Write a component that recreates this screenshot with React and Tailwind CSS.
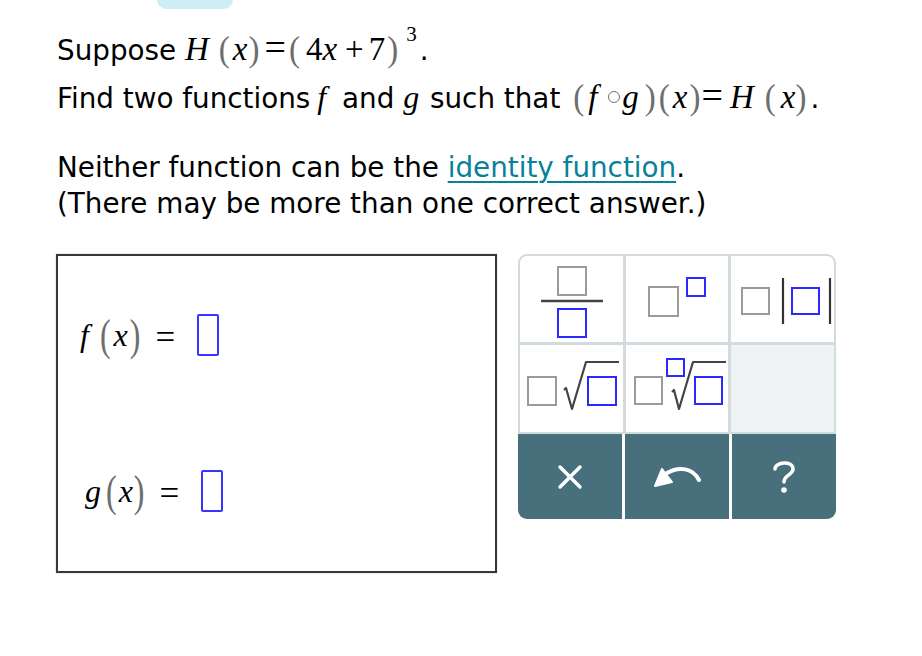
import React from "react";

const SANS = "font-['DejaVu_Sans','Verdana',sans-serif]";
const SERIF = "font-['Liberation_Serif','Times_New_Roman',serif]";

function P({ children, cls }) {
  return <span className={`inline-block text-[#6e6e6e] ${cls}`}>{children}</span>;
}

function Comp({ cls }) {
  return <span className={`inline-block w-[12px] h-[12px] rounded-full border-[1.5px] border-[#707070] align-[5px] ${cls}`} />;
}

function BlueBox() {
  return <span className="inline-block w-[22px] h-[42px] border-2 border-[#3535ff] rounded-[2px]" />;
}

function Cell({ children, cls }) {
  return <div className={`flex items-center justify-center ${cls}`}>{children}</div>;
}

function KeyFraction() {
  return (
    <svg width="102" height="86" viewBox="0 0 102 86">
      <rect x="38" y="11" width="28" height="28" fill="none" stroke="#9a9a9a" strokeWidth="2" />
      <line x1="21" y1="45" x2="83" y2="45" stroke="#444" strokeWidth="2.4" />
      <rect x="38" y="53" width="28" height="28" fill="none" stroke="#2a2aff" strokeWidth="2" />
    </svg>
  );
}

function KeyPower() {
  return (
    <svg width="102" height="86" viewBox="0 0 102 86">
      <rect x="23" y="31" width="29" height="29" fill="none" stroke="#9a9a9a" strokeWidth="2" />
      <rect x="61" y="22" width="18" height="18" fill="none" stroke="#2a2aff" strokeWidth="2" />
    </svg>
  );
}

function KeyAbs() {
  return (
    <svg width="102" height="86" viewBox="0 0 102 86">
      <rect x="10" y="32" width="27" height="26" fill="none" stroke="#9a9a9a" strokeWidth="2" />
      <line x1="51" y1="22" x2="51" y2="68" stroke="#333" strokeWidth="2.2" />
      <rect x="60" y="32" width="27" height="26" fill="none" stroke="#2a2aff" strokeWidth="2" />
      <line x1="98" y1="22" x2="98" y2="68" stroke="#333" strokeWidth="2.2" />
    </svg>
  );
}

function KeySqrt() {
  return (
    <svg width="102" height="87" viewBox="0 0 102 87">
      <rect x="8" y="32" width="28" height="28" fill="none" stroke="#9a9a9a" strokeWidth="2" />
      <path d="M44 45 L46 43 L52 64 L66 17 L99 17" fill="none" stroke="#444" strokeWidth="2.2" strokeLinejoin="round" />
      <rect x="68" y="32" width="28" height="28" fill="none" stroke="#2a2aff" strokeWidth="2" />
    </svg>
  );
}

function KeyRoot() {
  return (
    <svg width="102" height="87" viewBox="0 0 102 87">
      <rect x="9" y="32" width="27" height="27" fill="none" stroke="#9a9a9a" strokeWidth="2" />
      <rect x="41" y="14" width="17" height="17" fill="none" stroke="#2a2aff" strokeWidth="2" />
      <path d="M46 47 L48 45 L53 64 L67 17 L100 17" fill="none" stroke="#444" strokeWidth="2.2" strokeLinejoin="round" />
      <rect x="69" y="32" width="27" height="27" fill="none" stroke="#2a2aff" strokeWidth="2" />
    </svg>
  );
}

export default function App() {
  return (
    <div className={`w-[922px] h-[656px] bg-white text-black overflow-hidden ${SANS}`}>
      <div className="ml-[157px] w-[76px] h-[9px] bg-[#cdeef4] rounded-b-[14px]" />

      <div className="pl-[57px] text-[27.8px] whitespace-nowrap">
        <div className="mt-[18px] h-[48px] leading-[48px]">
          Suppose{" "}
          <span className={`${SERIF} text-[33px] leading-none`}>
            <i>H</i>
            <P cls="ml-[10px] scale-y-110">(</P>
            <i className="ml-[3px]">x</i>
            <P cls="ml-[1px] scale-y-110">)</P>
            <span className="ml-[5px] text-[38px] leading-none">=</span>
            <P cls="ml-[3px] scale-y-110">(</P>
            <span className="ml-[6px]">4</span>
            <i>x</i>
            <span className="ml-[8px]">+</span>
            <span className="ml-[5px]">7</span>
            <P cls="ml-[2px] scale-y-110">)</P>
            <span className="relative top-[-19px] ml-[8px] text-[21px] leading-none">3</span>
          </span>
          <span className="ml-[3px]">.</span>
        </div>

        <div className="h-[48px] leading-[48px]">
          Find two functions{" "}
          <i className={`${SERIF} text-[32px] leading-none inline-block ml-[-2px] mr-[16px]`}>f</i>
          and{" "}
          <i className={`${SERIF} text-[32px] leading-none inline-block mr-[2px]`}>g</i>
          {" "}such that{" "}
          <span className={`${SERIF} text-[33px] leading-none`}>
            <P cls="ml-[4px] scale-y-110">(</P>
            <i className="ml-[4px]">f</i>
            <Comp cls="ml-[11px]" />
            <i className="ml-[2px]">g</i>
            <P cls="ml-[6px] scale-y-110">)</P>
            <P cls="ml-[3px] scale-y-110">(</P>
            <i className="ml-[3px]">x</i>
            <P cls="ml-[2px] scale-y-110">)</P>
            <span className="ml-[1px] text-[38px] leading-none">=</span>
            <i className="ml-[7px]">H</i>
            <P cls="ml-[11px] scale-y-110">(</P>
            <i className="ml-[5px]">x</i>
            <P cls="ml-[0px] scale-y-110">)</P>
          </span>
          <span className="ml-[4px]">.</span>
        </div>

        <div className="mt-[27px] leading-[36px]">
          <div>
            Neither function can be the{" "}
            <span className="text-[#08819a] underline decoration-[2px] underline-offset-[4px]">identity function</span>.
          </div>
          <div>(There may be more than one correct answer.)</div>
        </div>
      </div>

      <div className="flex mt-[32px] ml-[56px]">
        <div className="w-[441px] h-[319px] border-2 border-[#383838] shadow-[0_0_1px_rgba(0,0,0,0.4)]">
          <div className="flex items-center h-[42px] mt-[58px] pl-[22px]">
            <span className={`${SERIF} text-[32px] leading-none`}>
              <i>f</i>
              <P cls="ml-[11px] scale-y-[1.4]">(</P>
              <i className="ml-[3px]">x</i>
              <P cls="ml-[2px] scale-y-[1.4]">)</P>
            </span>
            <span className={`${SANS} inline-block ml-[14px] text-[26px] leading-none scale-y-[1.8] font-light`}>=</span>
            <span className="ml-[21px] flex"><BlueBox /></span>
          </div>
          <div className="flex items-center h-[42px] mt-[114px] pl-[27px]">
            <span className={`${SERIF} text-[32px] leading-none`}>
              <i>g</i>
              <P cls="ml-[5px] scale-y-[1.4]">(</P>
              <i className="ml-[2px]">x</i>
              <P cls="ml-[1px] scale-y-[1.4]">)</P>
            </span>
            <span className={`${SANS} inline-block ml-[14px] text-[26px] leading-none scale-y-[1.8] font-light`}>=</span>
            <span className="ml-[21px] flex"><BlueBox /></span>
          </div>
        </div>

        <div className="ml-[21px] w-[318px]">
          <div className="grid grid-cols-3 grid-rows-[86px_87px] gap-[3px] p-[2px] bg-[#d2dcdf] rounded-t-[9px]">
            <Cell cls="bg-white rounded-tl-[7px]"><KeyFraction /></Cell>
            <Cell cls="bg-white"><KeyPower /></Cell>
            <Cell cls="bg-white rounded-tr-[7px]"><KeyAbs /></Cell>
            <Cell cls="bg-white"><KeySqrt /></Cell>
            <Cell cls="bg-white"><KeyRoot /></Cell>
            <Cell cls="bg-[#eef2f3]" />
          </div>
          <div className="flex gap-[3px] h-[85px] bg-white">
            <div className="flex-1 bg-[#476f7c] rounded-bl-[9px] flex items-center justify-center">
              <svg width="26" height="26" viewBox="0 0 26 26">
                <path d="M3 3 L23 23 M23 3 L3 23" stroke="white" strokeWidth="3.5" strokeLinecap="round" />
              </svg>
            </div>
            <div className="flex-1 bg-[#476f7c] flex items-center justify-center">
              <svg width="48" height="22" viewBox="0 0 48 22">
                <path d="M46 14 C40 2, 26 0, 14 7" fill="none" stroke="white" strokeWidth="4" strokeLinecap="round" />
                <path d="M2 20 L9 3 L19 16 Z" fill="white" stroke="white" strokeWidth="2" strokeLinejoin="round" />
              </svg>
            </div>
            <div className="flex-1 bg-[#476f7c] rounded-br-[9px] flex items-center justify-center">
              <svg width="26" height="36" viewBox="0 0 26 36">
                <path d="M4 10 C4 3, 22 1, 22 10 C22 16, 13 16, 13 23" fill="none" stroke="white" strokeWidth="3.5" strokeLinecap="round" />
                <circle cx="13" cy="31" r="2.8" fill="white" />
              </svg>
            </div>
          </div>
        </div>
      </div>
    </div>
  );
}
